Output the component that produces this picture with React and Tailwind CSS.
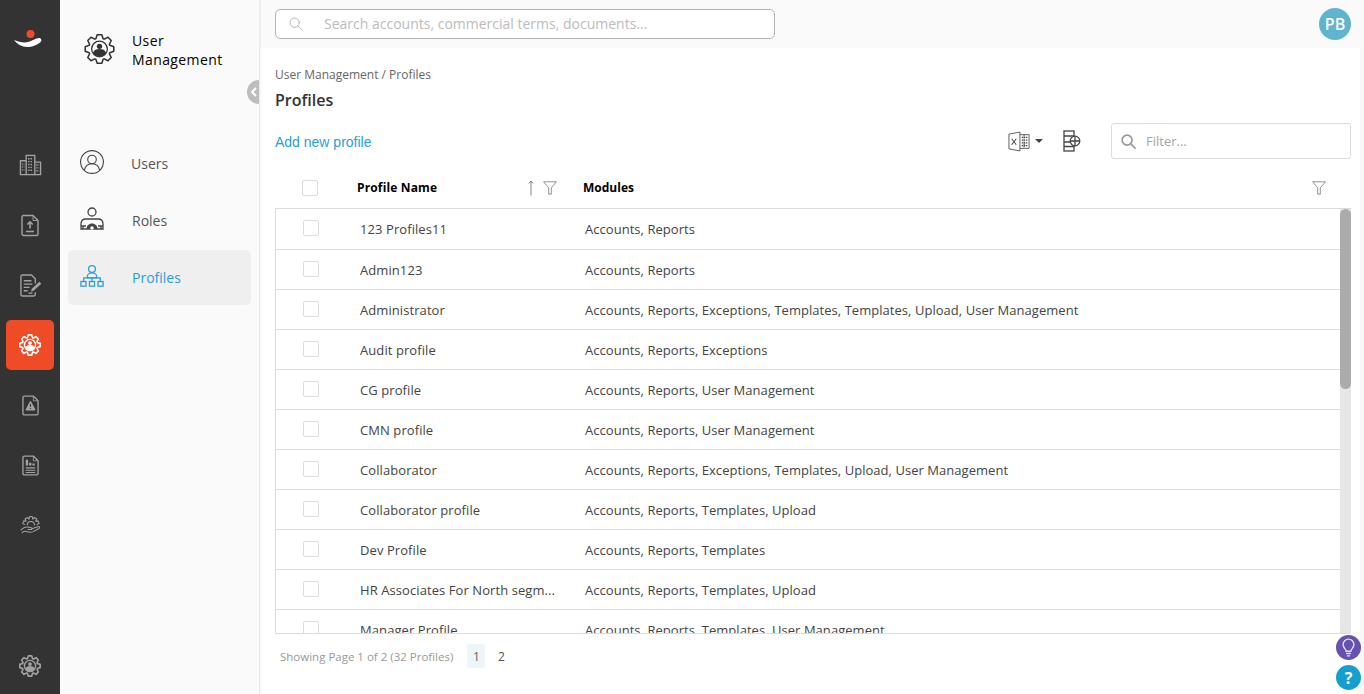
import React from "react";

const rows = [
	["123 Profiles11", "Accounts, Reports"],
	["Admin123", "Accounts, Reports"],
	["Administrator", "Accounts, Reports, Exceptions, Templates, Templates, Upload, User Management"],
	["Audit profile", "Accounts, Reports, Exceptions"],
	["CG profile", "Accounts, Reports, User Management"],
	["CMN profile", "Accounts, Reports, User Management"],
	["Collaborator", "Accounts, Reports, Exceptions, Templates, Upload, User Management"],
	["Collaborator profile", "Accounts, Reports, Templates, Upload"],
	["Dev Profile", "Accounts, Reports, Templates"],
	["HR Associates For North segm...", "Accounts, Reports, Templates, Upload"],
	["Manager Profile", "Accounts, Reports, Templates, User Management"],
];

const gearPoints = () => {
	const pts = [];
	for (let i = 0; i < 8; i++) {
		const a = (i * Math.PI) / 4 - Math.PI / 2;
		const w = 0.24;
		const p = (r, t) => `${(15 + r * Math.cos(t)).toFixed(2)} ${(15 + r * Math.sin(t)).toFixed(2)}`;
		pts.push(`${i === 0 ? "M" : "L"}${p(10.6, a - w - 0.1)}`, `L${p(14, a - w + 0.08)}`, `L${p(14, a + w - 0.08)}`, `L${p(10.6, a + w + 0.1)}`);
	}
	return pts.join(" ") + " Z";
};

// upper half of the gear over the hand icon
const halfGear = () => {
	const pts = [];
	const p = (r, t) => `${(13.5 + r * Math.cos(t)).toFixed(2)} ${(11 + r * Math.sin(t)).toFixed(2)}`;
	for (let i = 0; i < 5; i++) {
		const a = Math.PI + ((i + 0.5) * Math.PI) / 5;
		pts.push(`${i === 0 ? "M" : "L"}${p(7.6, a - 0.3)}`, `L${p(10.4, a - 0.17)}`, `L${p(10.4, a + 0.17)}`, `L${p(7.6, a + 0.3)}`);
	}
	return pts.join(" ");
};

const GearUser = ({ className, weight = 1.5 }) => (
	<svg viewBox="0 0 30 30" className={className} fill="none" stroke="currentColor" strokeWidth={weight} strokeLinejoin="round">
		<path d={gearPoints()} />
		<circle cx="15" cy="15" r="7.6" strokeWidth={weight - 0.3} />
		<circle cx="15" cy="12.4" r="2.6" fill="currentColor" stroke="none" />
		<path d="M8.6 18.800c1-2.800 3.400-3.700 6.400-3.700s5.400.9 6.400 3.700c-1.400 2-3.800 3.200-6.400 3.200s-5-1.200-6.400-3.200z" fill="currentColor" stroke="none" />
	</svg>
);

const Building = ({ className }) => (
	<svg viewBox="0 0 24 24" className={className} fill="none" stroke="currentColor" strokeWidth="1.400">
		<rect x="7.500" y="1.500" width="9" height="20" />
		<path d="M7.500 7H1.500v14.500h6M16.500 8.500h6v13h-6" />
		<path d="M9.500 5h5M9.500 8h5M9.500 11h5M9.500 14h5M9.500 17h5M3 10.500h3M3 13.500h3M3 16.500h3M18 11.500h3M18 14.500h3M18 17.500h3" strokeDasharray="1.500 1" />
	</svg>
);

const FileShell = ({ className, children }) => (
	<svg viewBox="0 0 18 22" className={className} fill="none" stroke="currentColor" strokeWidth="1.400" strokeLinejoin="round">
		<path d="M2.500 1h9.500l5 5v13.500c0 .8-.7 1.500-1.500 1.500h-13C1.700 21 1 20.300 1 19.500v-17C1 1.700 1.700 1 2.500 1z" />
		<path d="M12 1v5h5" strokeWidth="0.900" />
		{children}
	</svg>
);

const EditDoc = ({ className }) => (
	<svg viewBox="0 0 24 24" className={className} fill="none" stroke="currentColor" strokeWidth="1.400" strokeLinejoin="round">
		<path d="M17 10V5l-4-4H3.500C2.700 1 2 1.700 2 2.500v19c0 .8.700 1.500 1.500 1.500h12c.8 0 1.500-.7 1.500-1.500V19" />
		<path d="M5 7h8M5 10.500h9M5 14h6M5 17.500h4M10 20h4" />
		<path d="M12.500 18.500l.8-3 8-7.500 2 2.200-8 7.300z" fill="currentColor" stroke="none" />
	</svg>
);

const HandGear = ({ className }) => (
	<svg viewBox="0 0 26 24" className={className} fill="none" stroke="currentColor" strokeWidth="1.300" strokeLinecap="round" strokeLinejoin="round">
		<path d={halfGear()} />
		<path d="M9 11.500c0-2.800 1.900-4.500 4.500-4.500s4.500 1.700 4.500 4.500" />
		<path d="M1 17.500c3-3 5.500-4 8.500-3.500l4.500.8c1.500.4 1.300 2.200-.2 2.200H10" />
		<path d="M14.500 16l8-2.500c2-.5 2.800 1.200 1.300 2.200l-7.300 4c-3 1.400-6 .8-9-.2-2-.5-3.500 0-5 1.500" />
	</svg>
);

const Funnel = ({ className }) => (
	<svg viewBox="0 0 14 14" className={className} fill="none" stroke="currentColor" strokeWidth="0.800" strokeLinejoin="round">
		<path d="M.6.800h12.800L8.300 6.800v6.400H5.700V6.800z" />
	</svg>
);

const RoleIcon = ({ className }) => (
	<svg viewBox="0 0 24 24" className={className} fill="none" stroke="currentColor" strokeWidth="1.300">
		<circle cx="12" cy="5" r="4" />
		<path d="M1 22v-5c0-3 2-5 5-5h12c3 0 5 2 5 5v5z" />
		<path d="M1 19h5M18 19h5M3 22v-3M21 22v-3" strokeWidth="1.300" />
		<path d="M6.500 22c0-3.200 2.500-5.500 5.500-5.500s5.500 2.300 5.500 5.500z" fill="currentColor" stroke="none" />
		<circle cx="12" cy="21" r="1.800" fill="#fafafa" stroke="none" />
	</svg>
);

const UserCircle = ({ className }) => (
	<svg viewBox="0 0 24 24" className={className} fill="none" stroke="currentColor" strokeWidth="1.100">
		<circle cx="12" cy="12" r="11.400" />
		<circle cx="12" cy="9.500" r="4.300" />
		<path d="M4.300 20.300c.8-4 3.800-6.500 7.700-6.500s6.900 2.500 7.700 6.500" />
	</svg>
);

const TreeIcon = ({ className }) => (
	<svg viewBox="0 0 26 24" className={className} fill="none" stroke="currentColor" strokeWidth="1.400">
		<circle cx="13" cy="4.500" r="3.700" />
		<path d="M8 14v-1.500c0-2 2-3.800 5-3.800s5 1.800 5 3.800V14H8z" />
		<path d="M4 18v-4h18v4M13 14v4" />
		<rect x="1" y="18" width="5.500" height="5" />
		<rect x="10.250" y="18" width="5.500" height="5" />
		<rect x="19.500" y="18" width="5.500" height="5" />
	</svg>
);

const Magnifier = ({ className, strokeWidth = 1.500 }) => (
	<svg viewBox="0 0 16 16" className={className} fill="none" stroke="currentColor" strokeWidth={strokeWidth} strokeLinecap="round">
		<circle cx="6.500" cy="6.500" r="5.300" />
		<path d="M10.500 10.500l4.500 4.500" />
	</svg>
);

const Checkbox = () => <div className="w-4 h-4 rounded-[2px] border border-[#dcdcdc] bg-white"></div>;

const railClass = "h-[50px] w-12 flex items-center justify-center text-[#a3a3a3]";

export default function App() {
	return (
		<div className="relative flex h-[694px] w-[1364px] overflow-hidden bg-white font-['Open_Sans',sans-serif] text-[#444]">
			<aside className="w-[60px] shrink-0 bg-[#333333] flex flex-col items-center">
				<div className="h-[140px] w-full flex justify-center pt-[30px]">
					<svg viewBox="0 0 28 18" className="w-7 h-[18px] -ml-[5px]">
						<circle cx="16.500" cy="4" r="4" fill="#ee4b26" />
						<path d="M0 10c5 2 10 3 14 2 4-1 8-4 11-4 2 0 3 2 2 3.500-3 3.500-9 5.500-14 5.500S3 14 0 10z" fill="#fff" />
					</svg>
				</div>
				<div className="flex flex-col gap-[10px]">
					<div className={railClass}><Building className="w-[23px] h-[23px]" /></div>
					<div className={railClass}>
						<FileShell className="w-[18px] h-[23px]">
							<path d="M9 14V7.500M6.300 10L9 7.300l2.700 2.700M5 17h8" strokeWidth="1.600" />
						</FileShell>
					</div>
					<div className={railClass}><EditDoc className="w-[23px] h-[23px]" /></div>
					<div className="h-[50px] w-12 rounded-[5px] bg-[#ee4b26] flex items-center justify-center text-white">
						<GearUser className="w-[22px] h-[22px]" weight={2.200} />
					</div>
					<div className={railClass}>
						<FileShell className="w-[17px] h-[21px]">
							<path d="M9 7l4.500 8.500h-9z" fill="currentColor" />
							<path d="M9 9.500v3M9 13.600v1" stroke="#333333" strokeWidth="1.100" />
						</FileShell>
					</div>
					<div className={railClass}>
						<FileShell className="w-[17px] h-[21px]">
							<path d="M4 5v6h2.500V5zM7.500 8v3h2.500V8zM11 9v2h2.500V9z" fill="currentColor" stroke="none" />
							<path d="M4 13.500h10M4 16h10M4 18.500h10" strokeWidth="1.100" />
						</FileShell>
					</div>
					<div className={railClass}><HandGear className="w-[21px] h-[19px]" /></div>
				</div>
				<div className="mt-auto mb-[17px] text-[#a3a3a3]">
					<GearUser className="w-[22px] h-[22px]" weight={2.200} />
				</div>
			</aside>

			<nav className="relative w-[200px] shrink-0 bg-[#fafafa] border-r border-[#ececec] shadow-[1px_0_2px_rgba(0,0,0,0.05)]">
				<div className="h-[136px] flex pl-[24px] pt-[31px] gap-[17px]">
					<GearUser className="w-[31px] h-[36px] text-[#333]" />
					<div className="text-[14px] leading-[19px] font-medium tracking-[0.4px] text-black">User<br />Management</div>
				</div>
				<ul className="flex flex-col gap-[2px] px-2">
					<li className="h-[55px] flex items-center pl-3 gap-[28px] text-[#555]">
						<UserCircle className="w-6 h-6 -mt-1 text-[#444]" />
						<span className="text-[14px] -ml-px">Users</span>
					</li>
					<li className="h-[55px] flex items-center pl-3 gap-[28px] text-[#555]">
						<RoleIcon className="w-6 h-6 -mt-1 text-[#444]" />
						<span className="text-[14px]">Roles</span>
					</li>
					<li className="h-[55px] flex items-center pl-3 gap-[28px] rounded-[5px] bg-[#efefef] text-[#2a9fd6]">
						<TreeIcon className="w-6 h-6 -mt-1" />
						<span className="text-[14px]">Profiles</span>
					</li>
				</ul>
				<div className="absolute right-0 top-[80px] w-[12px] h-6 rounded-l-full bg-[#bdbdbd] flex items-center pl-[3px]">
					<svg viewBox="0 0 8 10" className="w-2 h-[10px]" fill="none" stroke="#fff" strokeWidth="2"><path d="M6 1L2 5l4 4" /></svg>
				</div>
			</nav>

			<main className="flex-1 min-w-0 flex flex-col">
				<header className="h-12 shrink-0 bg-[#fafafa] flex items-center justify-between pl-[15px] pr-[13px]">
					<div className="w-[500px] h-[30px] rounded-[5px] border border-[#b5b5b5] bg-white flex items-center pl-[13px]">
						<Magnifier className="w-[14px] h-[14px] text-[#b5b5b5]" strokeWidth={1.100} />
						<span className="ml-[21px] -mt-[2px] text-[14px] text-[#bcbcbc]">Search accounts, commercial terms, documents...</span>
					</div>
					<div className="w-8 h-8 rounded-full bg-[#5fb4cf] text-white text-[16px] font-semibold flex items-center justify-center">PB</div>
				</header>

				<section className="flex-1 min-h-0 pl-[15px] pr-[13px] flex flex-col">
					<div className="pt-[19px] text-[12px] leading-4 text-[#666]">User Management / Profiles</div>
					<h1 className="mt-[6px] text-[16px] leading-[22px] font-semibold text-[#333]">Profiles</h1>
					<div className="mt-[13px] h-9 flex items-center justify-between">
						<a className="text-[14px] text-[#2a9fd6] font-['Liberation_Sans',sans-serif]">Add new profile</a>
						<div className="flex items-center -mt-[2px]">
							<svg viewBox="0 0 24 22" className="w-[22px] h-[21px] text-[#444]" fill="none" stroke="currentColor" strokeWidth="0.900">
								<path d="M1 3l12-2.300v20.600L1 19z" fill="#fff" />
								<path d="M13 3.500h10v15H13" />
								<path d="M15 6.500h6.500M15 9.500h6.500M15 12.500h6.500M15 15.500h6.500M17.500 4v14" strokeDasharray="1.500 .8" strokeWidth="1.200" />
								<path d="M4 8l5 6.500M9 8l-5 6.500" strokeWidth="1.100" />
							</svg>
							<span className="ml-[5px] w-0 h-0 border-x-[4px] border-x-transparent border-t-[4px] border-t-[#444]"></span>
							<svg viewBox="0 0 18 22" className="ml-[20px] w-[18px] h-[22px] text-[#444]" fill="none" stroke="currentColor" strokeWidth="1.300">
								<rect x="1" y="1" width="10" height="20" />
								<path d="M1 6h10M1 12h10M1 16.500h10" />
								<circle cx="12" cy="11" r="4.800" fill="#fff" />
								<path d="M7.200 11h9.600M12 6.200v9.600" />
							</svg>
							<div className="ml-[30px] w-[240px] h-9 rounded-[3px] border border-[#dcdcdc] flex items-center pl-[9px]">
								<Magnifier className="w-[15px] h-[15px] text-[#999]" strokeWidth={1.800} />
								<span className="ml-[10px] mt-[2px] text-[13px] text-[#a5a5a5]">Filter...</span>
							</div>
						</div>
					</div>

					<div className="h-[40px] mt-[8px] flex items-center text-[12px] font-bold text-black">
						<div className="w-[82px] pl-[27px] shrink-0"><Checkbox /></div>
						<div className="w-[226px] shrink-0 flex items-center justify-between pr-[26px]">
							<span className="tracking-[0.15px]">Profile Name</span>
							<span className="flex items-center gap-[8px] text-[#777]">
								<svg viewBox="0 0 8 16" className="w-2 h-4" fill="none" stroke="currentColor" strokeWidth="0.900"><path d="M4 15.500V1M1.800 3.500L4 1l2.200 2.500" /></svg>
								<Funnel className="w-[14px] h-[14px]" />
							</span>
						</div>
						<div className="flex-1 flex items-center justify-between pr-[25px]">
							<span>Modules</span>
							<Funnel className="w-[14px] h-[14px] text-[#777]" />
						</div>
					</div>

					<div className="relative h-[426px] border border-r-0 border-[#dcdcdc] overflow-hidden flex">
						<div className="flex-1 min-w-0">
							{rows.map(([name, modules]) => (
								<div key={name} className="h-10 first:h-[41px] border-b border-[#dcdcdc] flex items-center text-[13px] text-[#444]">
									<div className="w-[84px] pl-[27px] shrink-0 -mt-[2px]"><Checkbox /></div>
									<div className="w-[225px] shrink-0 truncate pr-1 mt-[2px] tracking-[0.08px]">{name}</div>
									<div className="flex-1 truncate mt-[2px] tracking-[0.04px]">{modules}</div>
								</div>
							))}
						</div>
						<div className="w-[11px] shrink-0 bg-[#e6e6e6]">
							<div className="h-[180px] rounded-full bg-[#ababab]"></div>
						</div>
					</div>

					<div className="mt-[10px] flex items-center pl-[5px] text-[11.5px]">
						<span className="mt-[2px] text-[#999]">Showing Page 1 of 2 (32 Profiles)</span>
						<span className="ml-[14px] w-[18px] h-6 pt-[2px] rounded-[2px] bg-[#edf5f8] flex items-center justify-center text-[#666] text-[12px]">1</span>
						<span className="ml-[7px] w-[18px] h-6 pt-[2px] flex items-center justify-center text-[#555] text-[12px]">2</span>
					</div>
				</section>
			</main>

			<div className="absolute right-0 top-12 bottom-0 w-1 bg-[#f8f8f8]"></div>

			<div className="absolute right-[3px] top-[635px] flex flex-col gap-[5px]">
				<div className="w-[25px] h-[25px] rounded-full bg-[#6650b0] flex items-center justify-center">
					<svg viewBox="0 0 14 20" className="w-[13px] h-[19px]" fill="none" stroke="#e4defa" strokeWidth="1.500" strokeLinecap="round">
						<path d="M4.500 14c0-2-3.300-3.500-3.300-7.200C1.200 3.500 3.800 1 7 1s5.800 2.500 5.800 5.800c0 3.700-3.300 5.200-3.300 7.200z" />
						<path d="M5 16.500h4M5.800 19h2.400" />
					</svg>
				</div>
				<div className="w-[25px] h-[25px] rounded-full bg-[#159fd0] flex items-center justify-center text-white text-[16px] font-bold">?</div>
			</div>
		</div>
	);
}
